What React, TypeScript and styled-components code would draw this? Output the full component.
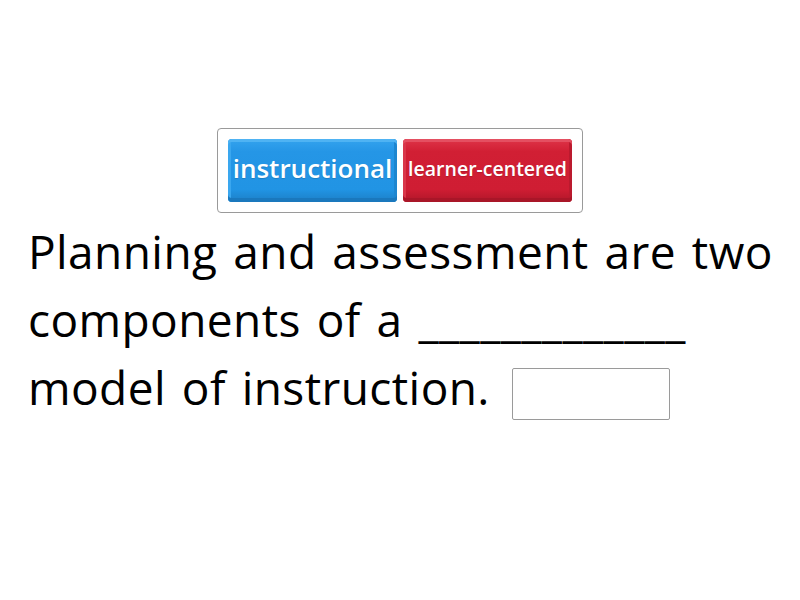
import React from "react";
import styled, { createGlobalStyle } from "styled-components";

const Global = createGlobalStyle`
  html, body { margin: 0; padding: 0; background: #ffffff; }
  body { font-family: "Open Sans", "Liberation Sans", sans-serif; }
`;

const Page = styled.div`
  width: 800px;
  height: 600px;
  box-sizing: border-box;
  padding-top: 128px;
  display: flex;
  flex-direction: column;
  align-items: center;
  overflow: hidden;
`;

const Tray = styled.div`
  display: flex;
  gap: 6px;
  padding: 10px;
  border: 1px solid #9a9a9a;
  border-radius: 4px;
  background: #fff;
`;

const Tile = styled.div<{ $tone: "blue" | "red"; $size: number }>`
  width: 169px;
  height: 63px;
  box-sizing: border-box;
  padding-bottom: 5px;
  border-radius: 4px;
  display: flex;
  align-items: center;
  justify-content: center;
  color: #fff;
  font-weight: 600;
  font-size: ${(p) => p.$size}px;
  white-space: nowrap;
  text-shadow: 0 1px 1px rgba(0, 0, 0, 0.15);
  background: ${(p) =>
    p.$tone === "blue"
      ? "linear-gradient(#34a3ee, #2596e6 20%, #2194e4 80%, #1c7fc6)"
      : "linear-gradient(#de3448, #d11f34 20%, #cf1d33 80%, #b01729)"};
  box-shadow: inset 0 3px 0 ${(p) => (p.$tone === "blue" ? "#4fb3f3" : "#e44f61")},
    inset 0 -4px 0 ${(p) => (p.$tone === "blue" ? "#1a78bd" : "#a91628")},
    inset 3px 0 0 ${(p) => (p.$tone === "blue" ? "#3aa7ef" : "#d9364a")},
    inset -3px 0 0 ${(p) => (p.$tone === "blue" ? "#1d86d0" : "#bb1a2e")};
`;

const Question = styled.p`
  align-self: stretch;
  margin: 4px 0 0;
  padding: 0 10px 0 28px;
  font-size: 46px;
  line-height: 68px;
  letter-spacing: 0.42px;
  word-spacing: 3.5px;
  color: #000;
  font-weight: 400;
`;

const Blank = styled.span`
  display: inline-block;
  width: 158px;
  height: 52px;
  box-sizing: border-box;
  margin-left: 6px;
  border: 1px solid #9a9a9a;
  border-radius: 2px;
  vertical-align: -15px;
  background: #fff;
`;

export default function App() {
  return (
    <>
      <Global />
      <Page>
        <Tray>
          <Tile $tone="blue" $size={26}>instructional</Tile>
          <Tile $tone="red" $size={19.5}>learner-centered</Tile>
        </Tray>
        <Question>
          Planning and assessment are two components of a _____________ model of
          instruction. <Blank />
        </Question>
      </Page>
    </>
  );
}
